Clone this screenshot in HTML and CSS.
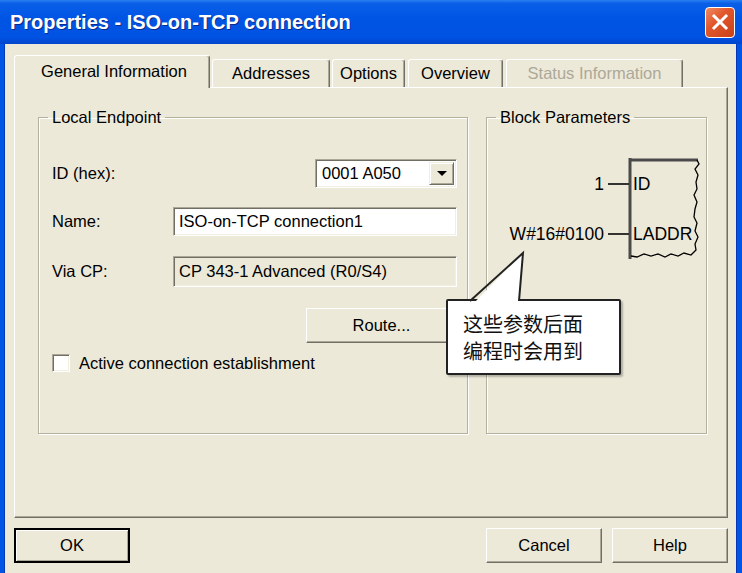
FILE: index.html
```html
<!DOCTYPE html>
<html lang="en">
<head>
    <meta charset="UTF-8">
    <title>Properties - ISO-on-TCP connection</title>
    <link rel="stylesheet" href="styles.css">
</head>
<body>
    <div class="window">
        <div class="titlebar">
            <span class="title">Properties - ISO-on-TCP connection</span>
            <button class="close" title="Close">
                <svg width="18" height="18" viewBox="0 0 18 18">
                    <path d="M3 3 L15 15 M15 3 L3 15" stroke="#fff" stroke-width="3" stroke-linecap="square"/>
                </svg>
            </button>
        </div>

        <div class="frame">
            <div class="tabs">
                <div class="tab selected tab-general">General Information</div>
                <div class="tab tab-addr">Addresses</div>
                <div class="tab tab-opt">Options</div>
                <div class="tab tab-over">Overview</div>
                <div class="tab disabled tab-status">Status Information</div>
            </div>

            <div class="panel">
                <fieldset class="group local">
                    <legend>Local Endpoint</legend>
                    <div class="rows">
                        <div class="row row-id">
                            <span class="label">ID (hex):</span>
                            <div class="combo">
                                <span class="combo-value">0001 A050</span>
                                <span class="combo-btn">
                                    <svg width="10" height="6" viewBox="0 0 10 6"><polygon points="0,0 10,0 5,5" fill="#000"/></svg>
                                </span>
                            </div>
                        </div>
                        <div class="row row-name">
                            <span class="label">Name:</span>
                            <div class="field">ISO-on-TCP connection1</div>
                        </div>
                        <div class="row row-via">
                            <span class="label">Via CP:</span>
                            <div class="field readonly">CP 343-1 Advanced (R0/S4)</div>
                        </div>
                        <div class="row row-route">
                            <button class="btn route">Route...</button>
                        </div>
                        <div class="row row-check">
                            <span class="checkbox"></span>
                            <span class="check-label">Active connection establishment</span>
                        </div>
                    </div>
                </fieldset>

                <fieldset class="group block">
                    <legend>Block Parameters</legend>
                    <svg class="fb" width="205" height="140" viewBox="0 0 205 140">
                        <line x1="130" y1="31" x2="130" y2="132" stroke="#4a4a4a" stroke-width="3"/>
                        <line x1="129" y1="33" x2="198" y2="33" stroke="#4a4a4a" stroke-width="3"/>
                        <path d="M197 33 L199 37 L195 42 L198 48 L196 55 L197 62 L194 68 L197 75 L195 82 L194 90 L197 96 L195 104 L198 110 L195 117 L196 123 L191 128 L184 126 L178 129 L171 127 L165 130 L158 127 L151 129 L144 127 L137 130 L131 129"
                              fill="none" stroke="#000" stroke-width="1.3"/>
                        <line x1="108" y1="57" x2="129" y2="57" stroke="#333" stroke-width="2"/>
                        <line x1="108" y1="107" x2="129" y2="107" stroke="#333" stroke-width="2"/>
                        <text x="104" y="63" text-anchor="end">1</text>
                        <text x="133" y="63">ID</text>
                        <text x="104" y="113" text-anchor="end">W#16#0100</text>
                        <text x="133" y="113">LADDR</text>
                    </svg>
                </fieldset>
            </div>

            <div class="buttons">
                <button class="btn default">OK</button>
                <button class="btn cancel">Cancel</button>
                <button class="btn">Help</button>
            </div>
        </div>

        <!-- annotation bubble over the dialog -->
        <div class="callout">
            <svg class="pointer" width="100" height="56" viewBox="0 0 100 56">
                <polygon points="27,54 77,3 73,54" fill="#fff"/>
                <polyline points="24,51 77,3 73,51" fill="none" stroke="#222" stroke-width="2"/>
            </svg>
            <p>这些参数后面<br>编程时会用到</p>
        </div>
    </div>
</body>
</html>
```

FILE: styles.css
```css
body {
    margin: 0;
    background: #fff;
}

.window {
    position: relative;
    width: 742px;
    height: 573px;
    overflow: hidden;
    font-family: "Liberation Sans", Arial, sans-serif;
    font-size: 16.5px;
    color: #000;
    display: flex;
    flex-direction: column;
}

/* Title bar */
.titlebar {
    height: 44px;
    flex: none;
    display: flex;
    align-items: center;
    justify-content: space-between;
    padding: 0 7px 0 10px;
    background: linear-gradient(to bottom, #2a7ff0 0, #0a5fe8 8%, #0055e5 40%, #0052e2 85%, #0045cc 100%);
}

.title {
    color: #fff;
    font-weight: bold;
    font-size: 20px;
    text-shadow: 1px 1px 0 #0a2a8c;
    margin-top: 1px;
}

.close {
    width: 30px;
    height: 31px;
    padding: 0;
    border: 1px solid #fff;
    border-radius: 4px;
    background: linear-gradient(135deg, #f08a64 0, #e2582c 40%, #c8401a 100%);
    display: flex;
    align-items: center;
    justify-content: center;
}

/* Dialog body */
.frame {
    flex: 1;
    background: #ece9d8;
    border-left: 4px solid #0055e5;
    border-right: 5px solid #0055e5;
    box-shadow: inset 1px 0 0 #0038b8, inset -1px 0 0 #0038b8;
    padding: 11px 9px 0 10px;
    display: flex;
    flex-direction: column;
}

/* Tabs */
.tabs {
    display: flex;
    align-items: flex-end;
    height: 32px;
}

.tab {
    height: 28px;
    display: flex;
    align-items: center;
    justify-content: center;
    border-top: 1px solid #fff;
    border-left: 1px solid #fff;
    border-right: 1px solid #716f64;
    box-shadow: inset -1px 0 0 #aca899;
    border-radius: 3px 3px 0 0;
    background: #ece9d8;
    box-sizing: border-box;
}

.tab.selected {
    height: 33px;
    margin-bottom: -1px;
    position: relative;
    z-index: 1;
    padding: 0 0 2px 4px;
}

.tab.disabled {
    color: #aca899;
}

.tab-general { width: 196px; }
.tab-addr { width: 118px; margin-left: 2px; }
.tab-opt { width: 73px; margin-left: 2px; }
.tab-over { width: 95px; margin-left: 3px; }
.tab-status { width: 177px; margin-left: 3px; }

.panel {
    height: 431px;
    box-sizing: border-box;
    border-top: 1px solid #fff;
    border-left: 1px solid #fff;
    border-right: 1px solid #716f64;
    border-bottom: 1px solid #716f64;
    box-shadow: inset -1px -1px 0 #aca899;
    padding: 19px 0 0 23px;
    display: flex;
    align-items: flex-start;
    gap: 18px;
}

/* Group boxes */
.group {
    margin: 0;
    min-inline-size: 0;
    box-sizing: border-box;
    height: 327px;
    border: 1px solid #b4b19f;
    box-shadow: inset 1px 1px 0 #fff, 1px 1px 0 #fff;
    padding: 0 10px 0 13px;
}

.group legend {
    margin-left: -4px;
    padding: 0 4px;
    line-height: 20px;
}

.local { width: 430px; }
.block { width: 221px; }

.rows {
    display: flex;
    flex-direction: column;
}

.row {
    display: flex;
    align-items: center;
}

.row-id {
    height: 29px;
    margin-top: 32px;
    justify-content: space-between;
}

.row-name {
    height: 29px;
    margin-top: 19px;
}

.row-via {
    height: 31px;
    margin-top: 20px;
}

.row-route {
    height: 35px;
    margin-top: 21px;
    justify-content: flex-end;
}

.row-check {
    height: 18px;
    margin-top: 11px;
}

.label {
    width: 121px;
    flex: none;
}

/* Sunken fields */
.field,
.combo {
    box-sizing: border-box;
    height: 100%;
    border: 1px solid;
    border-color: #aca899 #fff #fff #aca899;
    box-shadow: inset 1px 1px 0 #716f64, inset -1px -1px 0 #f1efe2;
    background: #fff;
    display: flex;
    align-items: center;
}

.field {
    flex: 1;
    padding-left: 5px;
}

.field.readonly {
    background: #ece9d8;
}

.combo {
    width: 142px;
    justify-content: space-between;
    padding: 2px;
}

.combo-value {
    padding-left: 4px;
}

.combo-btn {
    width: 25px;
    height: 100%;
    box-sizing: border-box;
    border-top: 1px solid #f1efe2;
    border-left: 1px solid #f1efe2;
    border-right: 1px solid #716f64;
    border-bottom: 1px solid #716f64;
    box-shadow: inset 1px 1px 0 #fff, inset -1px -1px 0 #aca899;
    background: #ece9d8;
    display: flex;
    align-items: center;
    justify-content: center;
}

.checkbox {
    width: 18px;
    height: 18px;
    box-sizing: border-box;
    border: 1px solid;
    border-color: #aca899 #fff #fff #aca899;
    box-shadow: inset 1px 1px 0 #716f64, inset -1px -1px 0 #f1efe2;
    background: #fff;
}

.check-label {
    margin-left: 9px;
}

/* Buttons */
.btn {
    font: inherit;
    color: #000;
    background: #ece9d8;
    box-sizing: border-box;
    height: 35px;
    padding: 0;
    border-top: 1px solid #fff;
    border-left: 1px solid #fff;
    border-right: 1px solid #716f64;
    border-bottom: 1px solid #716f64;
    box-shadow: inset -1px -1px 0 #aca899;
}

.route {
    width: 151px;
}

.btn.default {
    border: 2px solid #000;
    box-shadow: inset 1px 1px 0 #fff, inset -1px -1px 0 #aca899;
}

.buttons {
    display: flex;
    gap: 10px;
    margin-top: 10px;
}

.buttons .btn {
    width: 116px;
}

.buttons .cancel {
    margin-left: auto;
}

/* Function block drawing */
.fb {
    display: block;
}

.fb text {
    font-family: "Liberation Sans", Arial, sans-serif;
    font-size: 17.5px;
    fill: #000;
}

/* Annotation */
.callout {
    position: absolute;
    left: 446px;
    top: 299px;
    width: 175px;
    height: 76px;
    box-sizing: border-box;
    background: #fff;
    border: 2px solid #222;
    border-radius: 2px;
    box-shadow: 2px 2px 2px rgba(0, 0, 0, 0.25);
}

.callout .pointer {
    position: absolute;
    left: -2px;
    top: -51px;
}

.callout p {
    margin: 0;
    padding: 9px 0 0 15px;
    font-family: "Noto Sans CJK SC", sans-serif;
    font-size: 20px;
    line-height: 27px;
    color: #111;
}
```
